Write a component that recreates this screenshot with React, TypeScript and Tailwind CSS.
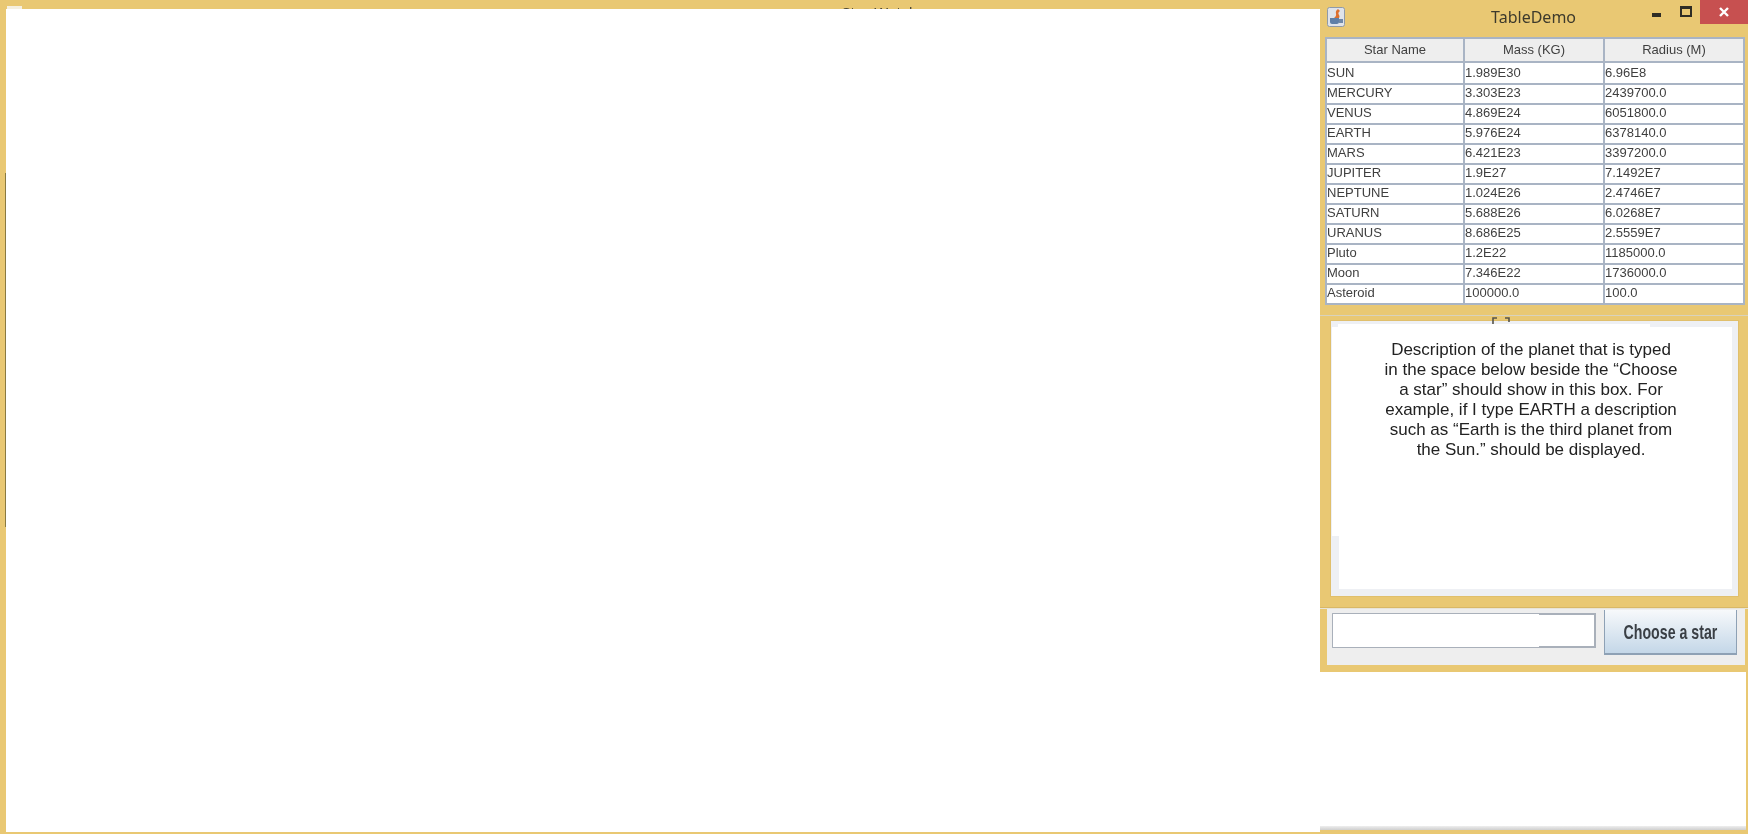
const ROWS = [
  ["SUN", "1.989E30", "6.96E8"],
  ["MERCURY", "3.303E23", "2439700.0"],
  ["VENUS", "4.869E24", "6051800.0"],
  ["EARTH", "5.976E24", "6378140.0"],
  ["MARS", "6.421E23", "3397200.0"],
  ["JUPITER", "1.9E27", "7.1492E7"],
  ["NEPTUNE", "1.024E26", "2.4746E7"],
  ["SATURN", "5.688E26", "6.0268E7"],
  ["URANUS", "8.686E25", "2.5559E7"],
  ["Pluto", "1.2E22", "1185000.0"],
  ["Moon", "7.346E22", "1736000.0"],
  ["Asteroid", "100000.0", "100.0"],
];

const HEADERS = ["Star Name", "Mass (KG)", "Radius (M)"];

function JavaIcon() {
  return (
    <svg width="18" height="20" viewBox="0 0 18 20" className="blur-[0.6px]">
      <rect x="0.5" y="0.5" width="17" height="19" rx="2" fill="#dfe3ea" stroke="#8f9aa8" />
      <path d="M11 2 C6 6 12 7 7 11 H12 C14 8 9 7 13 4 Z" fill="#dd6f2e" />
      <path d="M3 11 H12 V15 C12 16 11 17 10 17 H5 C4 17 3 16 3 15 Z" fill="#5f7fa8" />
      <rect x="12" y="12" width="4" height="4" fill="#6f88a8" />
    </svg>
  );
}

function TitleBar() {
  return (
    <div className="flex h-[37px] items-start">
      <div className="ml-[7px] mt-[7px]">
        <JavaIcon />
      </div>
      <div className="ml-[26px] mt-[6px] w-[336px] text-center text-[16px] leading-[22px] text-[#3d3a2c] blur-[0.5px] font-['Noto_Sans',sans-serif]">
        TableDemo
      </div>
      <div className="ml-[-44px] mt-[13px] h-[4px] w-[9px] bg-[#2f2d25] blur-[0.5px]" />
      <div className="ml-[19px] mt-[6px] h-[11px] w-[12px] border-2 border-t-[3px] border-[#2f2d25] blur-[0.5px]" />
      <div className="ml-[8px] flex h-[24px] w-[50px] items-center justify-center bg-[#c75050]">
        <svg width="12" height="12" viewBox="0 0 12 12" className="blur-[0.4px]">
          <path d="M2 2 L10 10 M10 2 L2 10" stroke="#fff" strokeWidth="2.4" />
        </svg>
      </div>
    </div>
  );
}

function StarTable() {
  return (
    <div className="ml-[5px] w-[420px] border-2 border-[#a9b4c4] bg-white text-[13px] text-[#3f3f3f] blur-[0.6px] font-['Liberation_Sans',Arial,sans-serif]">
      <div className="grid h-[24px] grid-cols-[138px_140px_1fr] bg-[#eeeeee]">
        {HEADERS.map((h, i) => (
          <div
            key={h}
            className={`flex items-center justify-center border-b-2 border-[#a9b4c4] ${i < 2 ? "border-r-2" : ""}`}
          >
            {h}
          </div>
        ))}
      </div>
      {ROWS.map((row, r) => (
        <div key={row[0]} className="grid h-[20px] grid-cols-[138px_140px_1fr]">
          {row.map((cell, i) => (
            <div
              key={i}
              className={`flex items-center border-[#a9b4c4] ${i < 2 ? "border-r-2" : ""} ${r < ROWS.length - 1 ? "border-b-2" : ""}`}
            >
              {cell}
            </div>
          ))}
        </div>
      ))}
    </div>
  );
}

function DescriptionPanel() {
  return (
    <div className="relative flex h-[292px] flex-col border-b border-[#d9b866] pl-[11px] pr-[10px] pt-[5px]">
      <svg width="18" height="8" viewBox="0 0 18 8" className="absolute left-[172px] top-[1px] blur-[0.4px]">
        <path d="M1 7 V1 H5 M13 1 H17 V5" fill="none" stroke="#55534a" strokeWidth="1.6" />
      </svg>
      <div className="flex h-[275px] w-[407px] flex-col bg-[#eef0f4] pt-[3px] pl-[1px] pr-[6px] pb-[7px] shadow-[0_0_0_1px_#e0bf6c]">
        <div className="ml-[6px] h-[3px] w-[312px] shrink-0 bg-white" />
        <div className="flex flex-1">
          <div className="flex w-[7px] flex-col">
            <div className="h-[209px] bg-white" />
            <div className="flex-1" />
          </div>
          <div className="flex-1 bg-white pt-[13px] pr-[9px] text-center text-[17px] leading-[20px] text-[#222222] blur-[0.3px] font-['Liberation_Sans',Arial,sans-serif]">
            <div>Description of the planet that is typed</div>
            <div>in the space below beside the “Choose</div>
            <div>a star” should show in this box. For</div>
            <div>example, if I type EARTH a description</div>
            <div>such as “Earth is the third planet from</div>
            <div>the Sun.” should be displayed.</div>
          </div>
        </div>
      </div>
    </div>
  );
}

function InputRow() {
  return (
    <div className="mx-[7px] flex h-[56px] w-[418px] bg-[#eeeeee] pl-[5px] pr-[8px]">
      <div className="mt-[4px] flex h-[35px] w-[264px] bg-white">
        <div className="w-[207px] rounded-l-[1px] border-y border-l border-[#a9b0ba]" />
        <div className="flex-1 border-y-2 border-r-2 border-[#a9b0ba]" />
      </div>
      <button className="ml-[8px] mt-[1px] flex h-[45px] w-[133px] items-center justify-center border-x border-b-2 border-[#8ea1b5] bg-gradient-to-b from-[#f7f9fb] to-[#c4d7e8] text-[#3a3f45]">
        <span className="scale-x-[0.675] text-[21px] font-bold whitespace-nowrap blur-[0.4px] font-['Liberation_Sans',Arial,sans-serif]">
          Choose a star
        </span>
      </button>
    </div>
  );
}

export default function App() {
  return (
    <div className="flex h-[834px] w-[1748px] overflow-hidden bg-[#e9c873]">
      <div className="flex w-[1320px] pb-[2px]">
        <div className="w-[6px] shrink-0">
          <div className="ml-[5px] mt-[173px] h-[354px] w-[1px] bg-[#8a7a40]" />
        </div>
        <div className="flex flex-1 flex-col">
          <div className="flex h-[9px] overflow-hidden">
            <div className="ml-[1px] mt-[6px] h-[3px] w-[15px] shrink-0 bg-[#f5f0e0] blur-[0.5px]" />
            <div className="ml-[820px] pt-[3px] text-[15px] leading-[18px] whitespace-nowrap text-[#4a4636] blur-[0.4px] font-['Noto_Sans',sans-serif]">
              Star Watch
            </div>
          </div>
          <div className="flex-1 bg-white" />
        </div>
      </div>
      <div className="flex w-[428px] flex-col">
        <TitleBar />
        <StarTable />
        <div className="h-[10px]" />
        <div className="h-[1px] bg-[#d8d2bd]" />
        <DescriptionPanel />
        <div className="h-[1px] bg-[#e8e4d8]" />
        <InputRow />
        <div className="h-[7px] shrink-0" />
        <div className="mr-[2px] flex flex-1 flex-col bg-white">
          <div className="flex-1" />
          <div className="h-[4px] bg-gradient-to-b from-[#eeeeee] to-[#cfcfcf]" />
        </div>
        <div className="h-[4px]" />
      </div>
    </div>
  );
}
